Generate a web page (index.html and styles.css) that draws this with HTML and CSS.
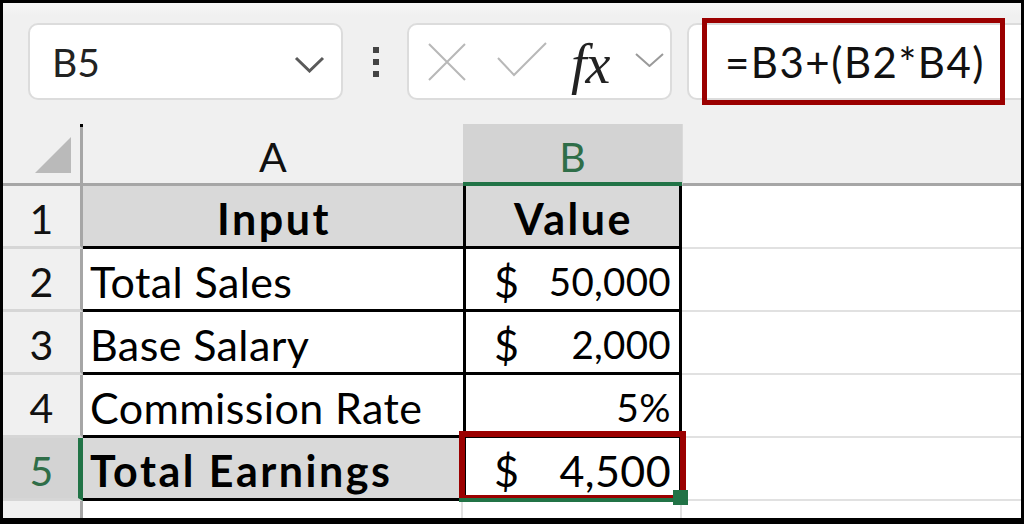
FILE: index.html
```html
<!DOCTYPE html>
<html>
<head>
<meta charset="utf-8">
<link rel="stylesheet" href="styles.css">
</head>
<body>
<div class="frame">
  <div class="toolbar">
    <div class="namebox">
      <span class="name-text">B5</span>
      <svg class="name-chev" width="31" height="17" viewBox="0 0 31 17"><polyline points="2,2 15.5,15 29,2" fill="none" stroke="#5a5a5a" stroke-width="3"/></svg>
    </div>
    <div class="dots"><i></i><i></i><i></i></div>
    <div class="fxbox">
      <svg class="ico-x" width="38" height="38" viewBox="0 0 38 38"><path d="M1 1 L37 37 M37 1 L1 37" fill="none" stroke="#b8b8b8" stroke-width="2"/></svg>
      <svg class="ico-check" width="50" height="35" viewBox="0 0 50 35"><polyline points="1,16 17,33 49,1" fill="none" stroke="#b8b8b8" stroke-width="2"/></svg>
      <span class="fx">fx</span>
      <svg class="ico-chev" width="29" height="14" viewBox="0 0 29 14"><polyline points="1,1 14.5,13 28,1" fill="none" stroke="#9a9a9a" stroke-width="2"/></svg>
    </div>
    <div class="formula">
      <span class="formula-text">=B3+(B2*B4)</span>
      <div class="annot"></div>
    </div>
  </div>

  <div class="sheet">
    <div class="corner"><div class="tri"></div></div>
    <div class="colhead">A</div>
    <div class="colhead sel">B</div>
    <div class="colhead rest"></div>

    <div class="rowhead">1</div>
    <div class="cell ca fill bold center">Input</div>
    <div class="cell cb fill bold center">Value</div>
    <div class="cell cc"></div>

    <div class="rowhead">2</div>
    <div class="cell ca">Total Sales</div>
    <div class="cell cb acct"><span>$</span><span>50,000</span></div>
    <div class="cell cc"></div>

    <div class="rowhead">3</div>
    <div class="cell ca">Base Salary</div>
    <div class="cell cb acct"><span>$</span><span>2,000</span></div>
    <div class="cell cc"></div>

    <div class="rowhead">4</div>
    <div class="cell ca">Commission Rate</div>
    <div class="cell cb right"><span>5%</span></div>
    <div class="cell cc"></div>

    <div class="rowhead selrow">5</div>
    <div class="cell ca fill bold">Total Earnings</div>
    <div class="cell cb acct active"><span>$</span><span>4,500</span>
      <div class="annot-cell"></div>
      <div class="sel-line"></div>
      <div class="handle"></div>
    </div>
    <div class="cell cc"></div>

    <div class="rowhead last"></div>
    <div class="cell la"></div>
    <div class="cell lb"></div>
    <div class="cell lc"></div>
  </div>
</div>
</body>
</html>
```

FILE: styles.css
```css
html, body {
  margin: 0;
  padding: 0;
  height: 100%;
  overflow: hidden;
  background: #000;
}

.frame {
  margin: 3px 3px 0 3px;
  width: 1018px;
  height: 515px;
  overflow: hidden;
  background: #f0f0f0;
  display: flex;
  flex-direction: column;
  font-family: Lato, "Open Sans", sans-serif;
}

/* ---------- toolbar ---------- */
.toolbar {
  height: 121px;
  flex: none;
  box-sizing: border-box;
  padding: 20px 0 0 25px;
  display: flex;
  align-items: flex-start;
  background: linear-gradient(#f6f6f6 0, #f0f0f0 12px);
}

.namebox {
  width: 315px;
  height: 77px;
  box-sizing: border-box;
  border: 2px solid #dcdcdc;
  border-radius: 10px;
  background: #fff;
  display: flex;
  align-items: center;
  justify-content: space-between;
  padding: 0 16px 0 22px;
}

.name-text {
  font-size: 39px;
  color: #222;
  line-height: 1;
  padding-top: 2px;
}

.name-chev {
  margin-top: 6px;
}

.dots {
  width: 6px;
  margin-left: 30px;
  height: 77px;
  display: flex;
  flex-direction: column;
  justify-content: center;
  gap: 6px;
}

.dots i {
  display: block;
  width: 6px;
  height: 6px;
  background: #444;
}

.fxbox {
  margin-left: 28px;
  width: 265px;
  height: 77px;
  box-sizing: border-box;
  border: 2px solid #dcdcdc;
  border-radius: 10px;
  background: #fff;
  display: flex;
  align-items: center;
  padding-left: 19px;
}

.ico-check {
  margin-left: 31px;
  margin-top: -4px;
}

.fx {
  margin-left: 24px;
  width: 52px;
  font-family: "Liberation Serif", "DejaVu Serif", serif;
  font-style: italic;
  font-size: 56px;
  line-height: 1;
  color: #222;
  margin-top: 4px;
  letter-spacing: -1px;
}

.ico-chev {
  margin-left: 12px;
  margin-top: -4px;
}

.formula {
  position: relative;
  margin-left: 15px;
  margin-right: -30px;
  flex: 1;
  height: 77px;
  box-sizing: border-box;
  border: 2px solid #dcdcdc;
  border-radius: 10px 0 0 10px;
  background: #fff;
  display: flex;
  align-items: center;
  padding-left: 36px;
}

.formula-text {
  font-size: 42px;
  letter-spacing: 1.5px;
  color: #111;
  line-height: 1;
}

.annot {
  position: absolute;
  left: 13px;
  top: -7px;
  width: 303px;
  height: 87px;
  box-sizing: border-box;
  border: 5px solid #9b0000;
}

/* ---------- sheet ---------- */
.sheet {
  flex: 1;
  display: grid;
  grid-template-columns: 80px 380px 219px 1fr;
  grid-template-rows: 62px repeat(5, 63px) 1fr;
  font-size: 43px;
  color: #000;
}

.sheet > div {
  box-sizing: border-box;
}

.corner {
  position: relative;
  background: #f0f0f0;
  border-right: 3px solid #a6a6a6;
  border-bottom: 3px solid #a6a6a6;
  display: flex;
  justify-content: flex-end;
  align-items: flex-end;
  padding: 0 9px 10px 0;
}

.corner::after {
  content: "";
  position: absolute;
  right: -3px;
  top: 0;
  width: 3px;
  height: 3px;
  background: #000;
}

.tri {
  width: 36px;
  height: 36px;
  background: #bababa;
  clip-path: polygon(100% 0, 100% 100%, 0 100%);
}

.colhead {
  background: #f0f0f0;
  border-bottom: 3px solid #a6a6a6;
  display: flex;
  align-items: center;
  justify-content: center;
  font-size: 41px;
  line-height: 1;
  padding-top: 5px;
  color: #111;
}

.colhead.sel {
  background: #d3d3d3;
  border-bottom: 4px solid #217346;
  color: #2f6e48;
  padding-top: 6px;
}

.colhead.rest {
  border-left: 1px solid #dadada;
}

.rowhead {
  background: #f0f0f0;
  border-right: 3px solid #a6a6a6;
  border-bottom: 3px solid #d6d6d6;
  display: flex;
  align-items: center;
  justify-content: center;
  font-size: 41px;
  line-height: 1;
  padding-top: 4px;
  color: #111;
}

.rowhead.selrow {
  background: #d3d3d3;
  border-right: 5px solid #217346;
  padding-left: 2px;
  color: #2f6e48;
}

.rowhead.last {
  border-bottom: none;
}

.cell {
  background: #fff;
  display: flex;
  align-items: center;
  line-height: 1;
  padding-top: 4px;
  white-space: nowrap;
  letter-spacing: 0.4px;
}

.cell.ca {
  border-bottom: 3px solid #000;
  padding-left: 7px;
}

.cell.cb {
  border-left: 3px solid #000;
  border-right: 3px solid #000;
  border-bottom: 3px solid #000;
  padding-right: 8px;
}

.cell.cc {
  border-bottom: 2px solid #e1e1e1;
}

.cell.fill {
  background: #d9d9d9;
}

.cell.bold {
  font-weight: 700;
  letter-spacing: 2.5px;
}

.cell.center {
  justify-content: center;
  padding-left: 2px;
  padding-right: 0;
}

.cell.acct {
  justify-content: space-between;
  padding-left: 28px;
}

.cell.acct span:last-child {
  font-size: 38.5px;
  letter-spacing: 0.3px;
}

.cell.right {
  justify-content: flex-end;
}

.cell.right span {
  font-size: 39px;
}

.cell.active {
  position: relative;
}

.annot-cell {
  position: absolute;
  left: -7px;
  top: -7px;
  width: 227px;
  height: 70px;
  box-sizing: border-box;
  border: 6px solid #9b0000;
}

.sel-line {
  position: absolute;
  left: -7px;
  top: 60px;
  width: 214px;
  height: 4px;
  background: #217346;
}

.handle {
  position: absolute;
  left: 207px;
  top: 52px;
  width: 15px;
  height: 15px;
  background: #217346;
}

.cell.la {
  border-right: 2px solid #e1e1e1;
}

.cell.lb {
  border-right: 2px solid #e1e1e1;
}
```
